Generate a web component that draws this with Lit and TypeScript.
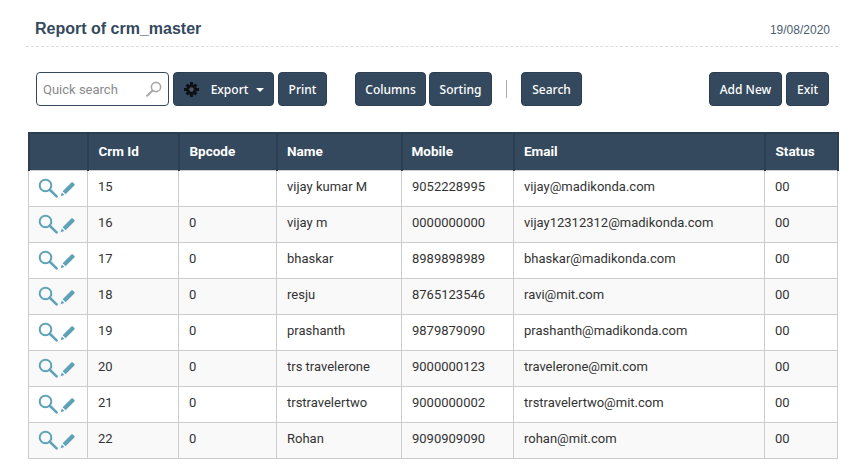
import { LitElement, html, css, svg } from "lit";
import { customElement } from "lit/decorators.js";

const rows = [
  ["15", "", "vijay kumar M", "9052228995", "vijay@madikonda.com", "00"],
  ["16", "0", "vijay m", "0000000000", "vijay12312312@madikonda.com", "00"],
  ["17", "0", "bhaskar", "8989898989", "bhaskar@madikonda.com", "00"],
  ["18", "0", "resju", "8765123546", "ravi@mit.com", "00"],
  ["19", "0", "prashanth", "9879879090", "prashanth@madikonda.com", "00"],
  ["20", "0", "trs travelerone", "9000000123", "travelerone@mit.com", "00"],
  ["21", "0", "trstravelertwo", "9000000002", "trstravelertwo@mit.com", "00"],
  ["22", "0", "Rohan", "9090909090", "rohan@mit.com", "00"],
];
const heads = ["", "Crm Id", "Bpcode", "Name", "Mobile", "Email", "Status"];

const lens = svg`<circle cx="7.5" cy="7.5" r="5.8" fill="none" stroke="currentColor" stroke-width="2"/><path d="M11.8 11.8 18.6 18.4" fill="none" stroke="currentColor" stroke-width="2.6" stroke-linecap="round"/>`;
const pencil = svg`<path d="M2.6 11.2 11.4 2.4a1 1 0 0 1 1.4 0l1.6 1.6a1 1 0 0 1 0 1.4L5.6 14.2ZM1.8 12.4 4.4 15 .6 16.2Z" fill="currentColor"/>`;
const gear = svg`<g fill="#0d1116"><circle cx="7.5" cy="7.5" r="5.2"/><path d="M6 0h3v3H6zM6 12h3v3H6zM0 6h3v3H0zM12 6h3v3h-3zM1.6 3.7l2.1-2.1 2 2-2.1 2.1zM9.3 11.4l2.1-2.1 2 2-2.1 2.1zM1.6 11.3l2-2 2.1 2.1-2 2zM9.3 3.6l2.1-2 2 2-2.1 2.1z"/></g><circle cx="7.5" cy="7.5" r="2.3" fill="#4a5665"/>`;

@customElement("app-root")
export class AppRoot extends LitElement {
  static styles = css`
    :host { display: block; width: 863px; height: 475px; background: #fff; font-family: Roboto, sans-serif; color: #333; overflow: hidden; }
    .page { padding: 0 25px 0 27px; }
    .title { display: flex; justify-content: space-between; align-items: center; height: 47px; padding: 12px 8px 0 9px; border-bottom: 1px dashed #ddd; box-sizing: border-box; width: 812px; margin-left: -1px; }
    h1 { margin: 0; font: bold 16px "Liberation Sans", sans-serif; color: #34495e; }
    .date { font: 12px "Liberation Sans", sans-serif; color: #4d5d70; margin-top: 2px; }
    .bar { display: flex; align-items: center; height: 34px; margin: 25px 0 26px 9px; }
    .search { box-sizing: border-box; width: 133px; height: 34px; border: 1px solid #34495e; border-radius: 4px; display: flex; align-items: center; justify-content: space-between; padding: 0 6px 0 6px; font-size: 13px; color: #8a8a8a; margin-right: 4px; }
    .search svg { width: 16px; height: 16px; color: #a9a9a9; }
    button { box-sizing: border-box; height: 34px; background: #34495e; border: 1px solid #2c3e50; border-radius: 4px; color: #fff; font: 500 12px/1 "Noto Sans", sans-serif; padding: 1px 0 0; display: flex; align-items: center; justify-content: center; }
    .export { width: 101px; margin-right: 4px; padding-left: 1px; }
    .export svg { width: 15px; height: 15px; margin: 0 12px 0 0; }
    .caret { width: 0; height: 0; border-left: 4.5px solid transparent; border-right: 4.5px solid transparent; border-top: 4.5px solid #fff; margin-left: 8px; }
    .print { width: 49px; margin-right: 28px; }
    .columns { width: 71px; margin-right: 3px; }
    .sorting { width: 63px; }
    .sep { width: 1px; height: 18px; background: #aaa; margin: 0 14px 0 14px; }
    .search-btn { width: 61px; }
    .spacer { flex: 1; }
    .add { width: 73px; margin-right: 4px; }
    .exit { width: 43px; margin-right: 9px; }
    table { border-collapse: collapse; table-layout: fixed; width: 810px; font-size: 13px; margin-left: 0.5px; }
    th { background: #34495e; color: #fff; height: 37px; box-sizing: border-box; text-align: left; font-weight: 700; font-size: 13.5px; padding: 0 0 1px 10px; border: 2px solid #2c3e50; border-width: 2px 2px 0 2px; }
    th:nth-child(4), th:nth-child(6) { padding-left: 9.5px; }
    th:nth-child(5) { padding-left: 9px; }
    td { height: 36px; box-sizing: border-box; padding: 0 0 4px 10px; border: 1px solid #ccc; color: #333; }
    tr:nth-child(even) td { background: #f9f9f9; }
    td.acts { padding: 0 0 0 10px; color: #5ea2b8; }
    .acts div { display: flex; align-items: center; margin-left: -1px; }
    .acts .l { width: 20px; height: 20px; }
    .acts .p { width: 16px; height: 17px; margin-left: 2px; }
  `;
  render() {
    const w = [59, 91, 98, 125, 112, 251, 73];
    return html`<div class="page">
      <div class="title"><h1>Report of crm_master</h1><span class="date">19/08/2020</span></div>
      <div class="bar">
        <div class="search"><span>Quick search</span><svg viewBox="0 0 20 20" style="transform:scaleX(-1)">${lens}</svg></div>
        <button class="export"><svg viewBox="0 0 15 15">${gear}</svg>Export<span class="caret"></span></button>
        <button class="print">Print</button>
        <button class="columns">Columns</button>
        <button class="sorting">Sorting</button>
        <span class="sep"></span>
        <button class="search-btn">Search</button>
        <span class="spacer"></span>
        <button class="add">Add New</button>
        <button class="exit">Exit</button>
      </div>
      <table>
        <colgroup>${w.map((x) => html`<col style="width:${x}px" />`)}</colgroup>
        <thead><tr>${heads.map((h) => html`<th>${h}</th>`)}</tr></thead>
        <tbody>${rows.map((r) => html`<tr>
          <td class="acts"><div><svg class="l" viewBox="0 0 20 20">${lens}</svg><svg class="p" viewBox="0 0 16 17">${pencil}</svg></div></td>
          ${r.map((c) => html`<td>${c}</td>`)}
        </tr>`)}</tbody>
      </table>
    </div>`;
  }
}
